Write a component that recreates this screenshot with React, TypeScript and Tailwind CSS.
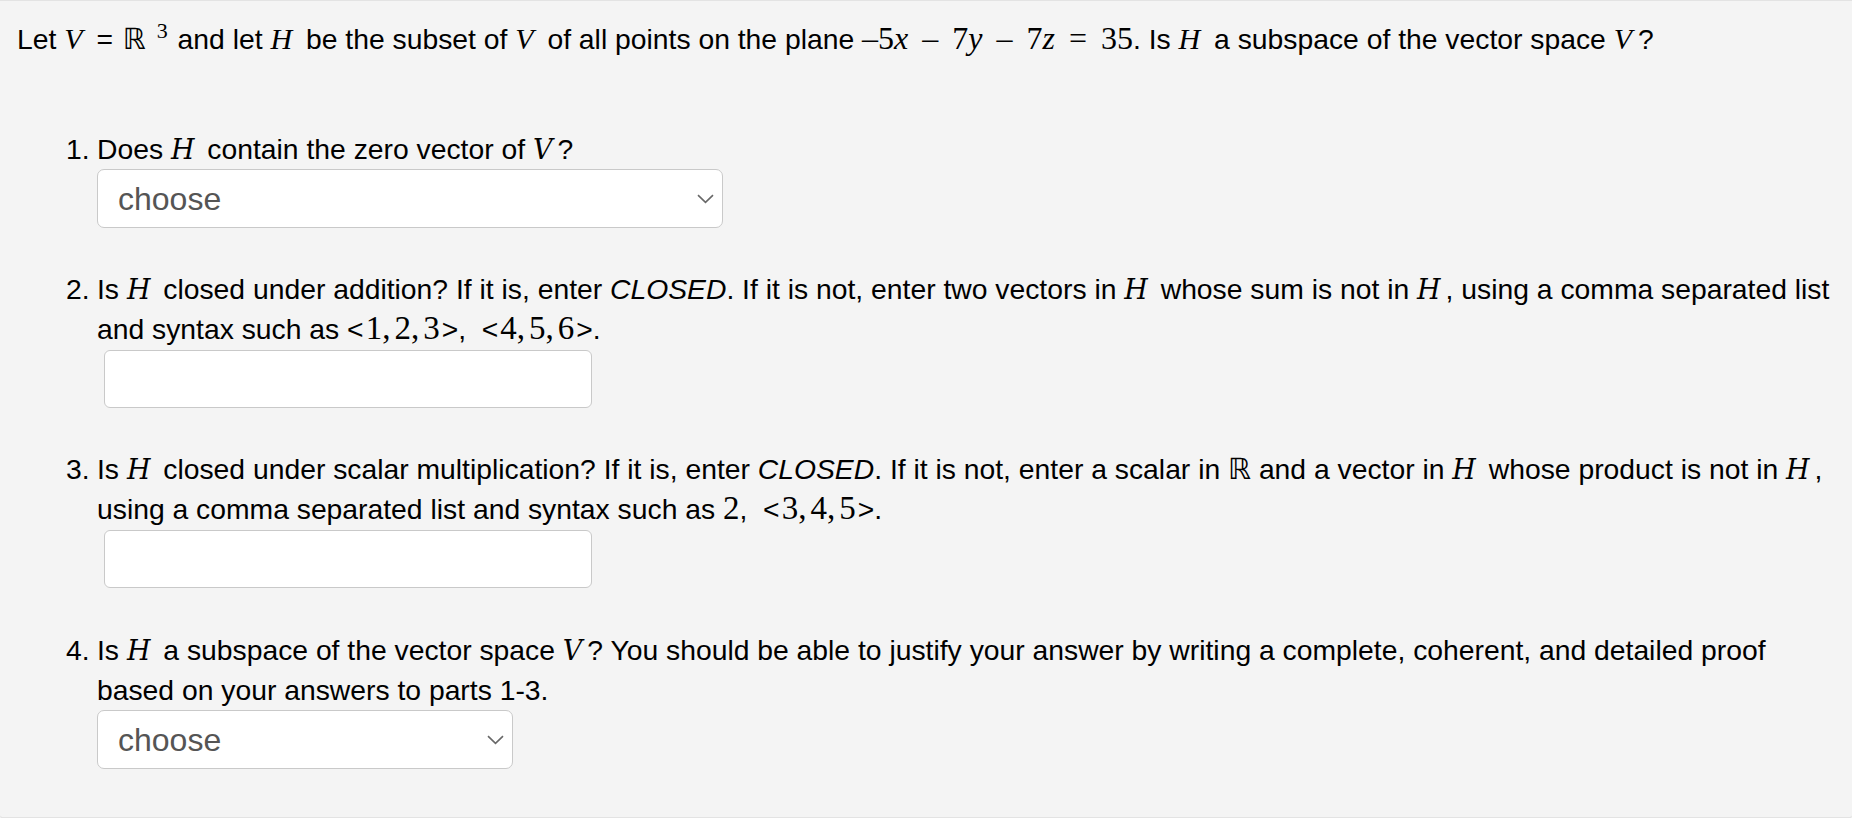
import React from "react";

// math letters inside the numbered parts (wide TeX-style italic)
function M({ children }: { children: React.ReactNode }) {
  return <span className="mr-[5px] font-['DejaVu_Serif',serif] italic text-[27px] leading-none">{children}</span>;
}

// math letters in the opening sentence (Times-style italic)
function T({ children }: { children: React.ReactNode }) {
  return <span className="mr-[6px] font-['Liberation_Serif',serif] italic text-[30px] leading-none">{children}</span>;
}

function Op({ children }: { children: React.ReactNode }) {
  return <span className="mx-[14px]">{children}</span>;
}

function Vec({ a, b, c }: { a: string; b: string; c: string }) {
  return (
    <span>
      &lt;
      <span className="mx-[2px] font-['Liberation_Serif',serif] text-[33px] leading-none">
        {a}
        <span className="mr-[4px]">,</span>
        {b}
        <span className="mr-[4px]">,</span>
        {c}
      </span>
      &gt;
    </span>
  );
}

function R() {
  return <span className="font-['DejaVu_Sans',sans-serif] text-[29px] leading-none">ℝ</span>;
}

function Chevron() {
  return (
    <svg width="17" height="10" viewBox="0 0 17 10" className="shrink-0">
      <polyline points="1,1.2 8.5,8.4 16,1.2" fill="none" stroke="#686868" strokeWidth="1.6" />
    </svg>
  );
}

function Choose({ width }: { width: string }) {
  return (
    <div className={`flex h-[59px] items-center justify-between rounded-[7px] border border-[#c9c9c9] bg-white pl-[20px] pr-[8px] ${width}`}>
      <span className="text-[32px] text-[#555555]">choose</span>
      <Chevron />
    </div>
  );
}

function Field() {
  return <div className="ml-[7px] mt-px h-[58px] w-[488px] rounded-[6px] border border-[#c9c9c9] bg-white" />;
}

function Item({ n, children, className = "" }: { n: number; children: React.ReactNode; className?: string }) {
  return (
    <li className={`flex ${className}`}>
      <span className="w-[31px] shrink-0">{n}.</span>
      <div className="min-w-0 flex-1">{children}</div>
    </li>
  );
}

export default function App() {
  return (
    <div className="min-h-screen bg-[#f4f4f4] font-['Liberation_Sans',Arial,sans-serif] text-[28.3px] leading-[40px] text-black">
      <div className="rounded-b-[4px] border-t border-b-2 border-[#e3e3e3] pb-[48px] pl-[17px] pr-[8px] pt-[18px]">
        <p className="whitespace-nowrap">
          Let <T>V</T> = <span className="ml-[2px]"><R /></span>
          <sup className="ml-[11px] mr-[2px] font-['Liberation_Serif',serif] text-[22px]">3</sup> and let <T>H</T> be the subset of{" "}
          <T>V</T> of all points on the plane{" "}
          <span className="font-['Liberation_Serif',serif] text-[32px] leading-none">
            –5<i>x</i>
            <Op>–</Op>7<i>y</i>
            <Op>–</Op>7<i>z</i>
            <Op>=</Op>35
          </span>
          . Is <T>H</T> a subspace of the vector space <T>V</T>?
        </p>

        <ol className="mt-[70px] pl-[49px]">
          <Item n={1}>
            <div>
              Does <M>H</M> contain the zero vector of <M>V</M>?
            </div>
            <Choose width="w-[626px]" />
          </Item>

          <Item n={2} className="mt-[41px]">
            <div>
              Is <M>H</M> closed under addition? If it is, enter <i>CLOSED</i>. If it is not, enter two vectors in <M>H</M> whose sum is
              not in <M>H</M>, using a comma separated list
              <br />
              and syntax such as <Vec a="1" b="2" c="3" />, &nbsp;<Vec a="4" b="5" c="6" />.
            </div>
            <Field />
          </Item>

          <Item n={3} className="mt-[41px]">
            <div>
              Is <M>H</M> closed under scalar multiplication? If it is, enter <i>CLOSED</i>. If it is not, enter a scalar in <R /> and a
              vector in <M>H</M> whose product is not in <M>H</M>,
              <br />
              using a comma separated list and syntax such as{" "}
              <span className="font-['Liberation_Serif',serif] text-[33px] leading-none">2</span>, &nbsp;<Vec a="3" b="4" c="5" />.
            </div>
            <Field />
          </Item>

          <Item n={4} className="mt-[42px]">
            <div>
              Is <M>H</M> a subspace of the vector space <M>V</M>? You should be able to justify your answer by writing a complete,
              coherent, and detailed proof
              <br />
              based on your answers to parts 1-3.
            </div>
            <Choose width="w-[416px]" />
          </Item>
        </ol>
      </div>
    </div>
  );
}
